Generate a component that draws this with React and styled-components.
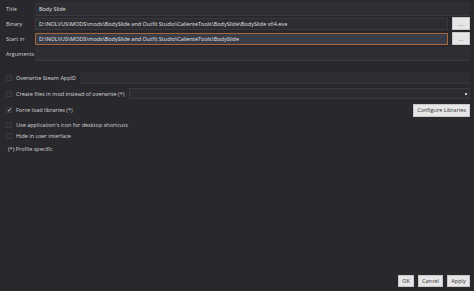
import styled, { createGlobalStyle } from 'styled-components';

const Global = createGlobalStyle`
  html, body {
    margin: 0;
    padding: 0;
    background: #29292d;
  }
  body {
    font-family: 'Open Sans', 'Liberation Sans', Arial, sans-serif;
    font-size: 5.5px;
    color: #d6d6d8;
  }
`;

const Page = styled.div`
  width: 474px;
  height: 291px;
  display: flex;
  flex-direction: column;
  box-sizing: border-box;
  padding: 1px 4px 4px 4px;
`;

const Form = styled.div`
  display: grid;
  grid-template-columns: 31px 1fr 22px;
  grid-auto-rows: 15px;
  align-items: center;
`;

const Label = styled.div`
  padding-left: 2px;
  white-space: nowrap;
  color: #d0d0d2;
`;

const Field = styled.div`
  grid-column: ${(p) => (p.$wide ? '2 / 4' : '2 / 3')};
  height: ${(p) => (p.$wide ? '14px' : '12px')};
  box-sizing: border-box;
  display: flex;
  align-items: center;
  padding-left: 3px;
  white-space: nowrap;
  overflow: hidden;
  background: ${(p) => (p.$focus ? '#3a3d48' : p.$wide ? '#2e2e33' : '#2c2c31')};
  border: 1px solid ${(p) => (p.$focus ? '#a8673a' : p.$wide ? 'transparent' : '#38383e')};
  border-bottom-color: ${(p) => (p.$focus ? '#a8673a' : '#3a3a40')};
  color: #e2e2e4;
`;

const SmallButton = styled.button`
  justify-self: end;
  width: 18px;
  height: 13px;
  padding: 0;
  margin: 0;
  border: 1px solid #c8c8c8;
  background: #e6e6e6;
  color: #444;
  font-family: inherit;
  font-size: 5px;
  line-height: 8px;
`;

const Options = styled.div`
  margin-top: 9px;
  display: flex;
  flex-direction: column;
`;

const OptionRow = styled.div`
  height: ${(p) => p.$h || 16}px;
  display: flex;
  align-items: center;
  gap: 4px;
  padding-left: 2px;
`;

const Box = styled.span`
  width: 6px;
  height: 6px;
  box-sizing: border-box;
  border: 1px solid #3a3a40;
  background: #2a2a2e;
  display: flex;
  align-items: center;
  justify-content: center;
  color: #e8e8e8;
  font-size: 6px;
  flex: none;
`;

const OptionText = styled.span`
  white-space: nowrap;
  color: #d6d6d8;
`;

const Band = styled.div`
  flex: 1;
  align-self: stretch;
  margin: 2px 0;
  background: #2d2d32;
  border-bottom: 1px solid #35353b;
`;

const Select = styled.div`
  flex: 1;
  height: 11px;
  box-sizing: border-box;
  margin-left: 1px;
  border: 1px solid #3a3a40;
  background: #2c2c31;
  display: flex;
  align-items: center;
  justify-content: flex-end;
  padding-right: 2px;
`;

const Arrow = styled.span`
  width: 2px;
  height: 2px;
  background: #cfcfcf;
`;

const PushButton = styled.button`
  height: 13px;
  padding: 0 ${(p) => p.$pad || 3}px;
  margin: 0 0 0 auto;
  border: 1px solid #c8c8c8;
  background: #e6e6e6;
  color: #333;
  font-family: inherit;
  font-size: 5.5px;
  white-space: nowrap;
  min-width: ${(p) => p.$min || 0}px;
`;

const Note = styled.div`
  margin-top: 4px;
  padding-left: 4px;
  color: #d0d0d2;
`;

const Footer = styled.div`
  margin-top: auto;
  display: flex;
  justify-content: flex-end;
  gap: 4px;
`;

const FooterButton = styled(PushButton)`
  margin: 0;
  height: 12px;
`;

export default function App() {
  return (
    <>
      <Global />
      <Page>
        <Form>
          <Label>Title</Label>
          <Field $wide>Body Slide</Field>
          <Label>Binary</Label>
          <Field>D:\NOLVUS\MODS\mods\BodySlide and Outfit Studio\CalienteTools\BodySlide\BodySlide x64.exe</Field>
          <SmallButton>...</SmallButton>
          <Label>Start in</Label>
          <Field $focus>D:\NOLVUS\MODS\mods\BodySlide and Outfit Studio\CalienteTools\BodySlide</Field>
          <SmallButton>...</SmallButton>
          <Label>Arguments</Label>
          <Field $wide></Field>
        </Form>
        <Options>
          <OptionRow>
            <Box />
            <OptionText>Overwrite Steam AppID</OptionText>
            <Band />
          </OptionRow>
          <OptionRow $h={15}>
            <Box />
            <OptionText>Create files in mod instead of overwrite (*)</OptionText>
            <Select>
              <Arrow />
            </Select>
          </OptionRow>
          <OptionRow $h={18}>
            <Box>✓</Box>
            <OptionText>Force load libraries (*)</OptionText>
            <PushButton $pad={3}>Configure Libraries</PushButton>
          </OptionRow>
          <OptionRow $h={11}>
            <Box />
            <OptionText>Use application's icon for desktop shortcuts</OptionText>
          </OptionRow>
          <OptionRow $h={11}>
            <Box />
            <OptionText>Hide in user interface</OptionText>
          </OptionRow>
          <Note>(*) Profile specific</Note>
        </Options>
        <Footer>
          <FooterButton $min={16}>OK</FooterButton>
          <FooterButton $min={23}>Cancel</FooterButton>
          <FooterButton $min={23}>Apply</FooterButton>
        </Footer>
      </Page>
    </>
  );
}
